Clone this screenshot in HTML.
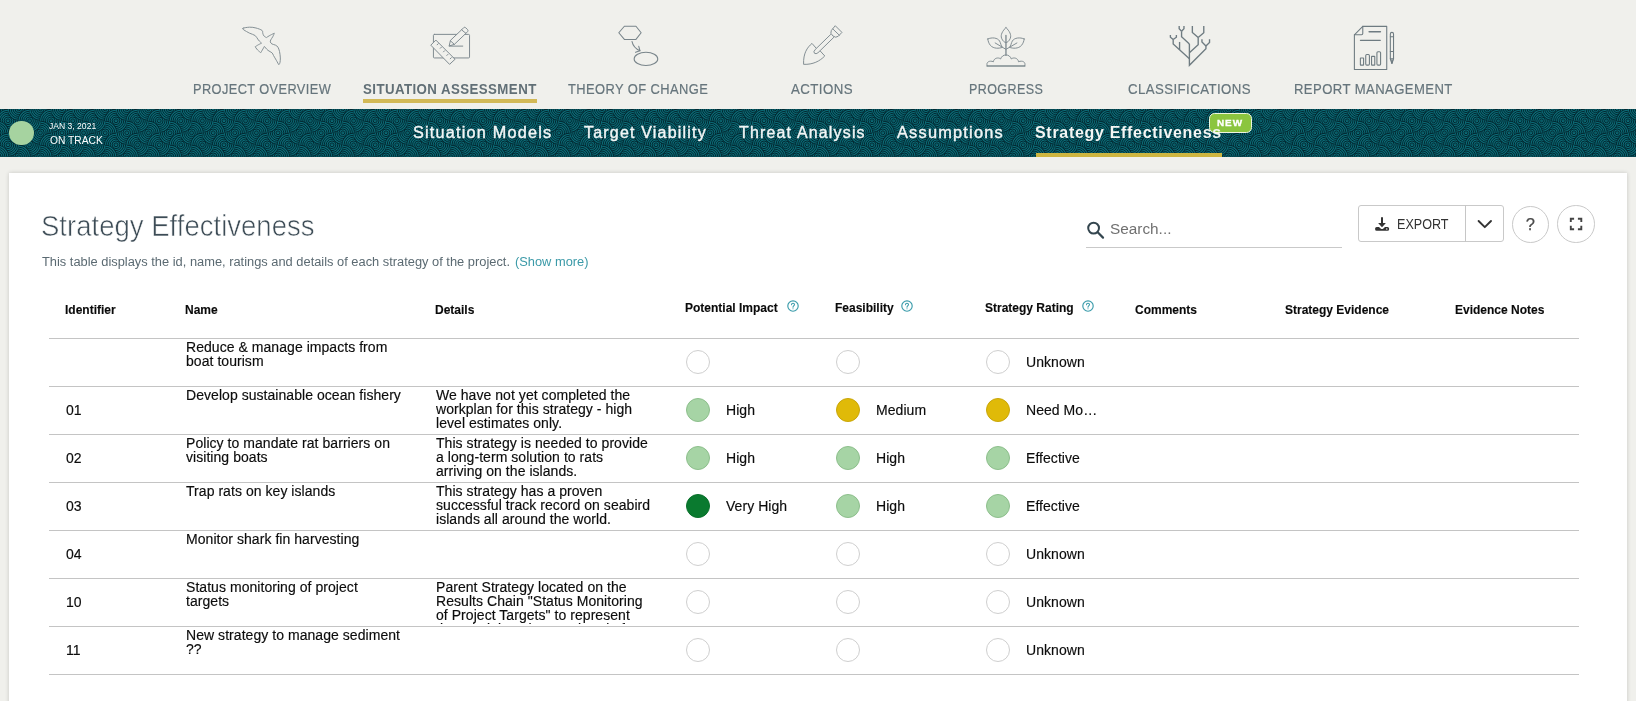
<!DOCTYPE html>
<html>
<head>
<meta charset="utf-8">
<title>Strategy Effectiveness</title>
<style>
*{box-sizing:border-box;margin:0;padding:0}
html,body{width:1636px;height:701px;overflow:hidden;background:#f0f0ec;font-family:"Liberation Sans",sans-serif;}
#root{will-change:transform;position:relative;width:1636px;height:701px;overflow:hidden;background:#f0f0ec}
.abs{position:absolute}
.f{position:absolute;white-space:nowrap;transform-origin:0 0;line-height:normal}
/* top nav */
.ni{position:absolute;overflow:visible}
.ni{fill:none;stroke-linecap:round;stroke-linejoin:round}
/* teal bar */
#bar{position:absolute;left:0;top:109px;width:1636px;height:48px;background:#0b5660;overflow:hidden}
/* card */
#card{position:absolute;left:9px;top:173px;width:1618px;height:560px;background:#fff;box-shadow:0 0 4px rgba(0,0,0,.18)}
/* table */
.th{position:absolute;top:303px;height:14px;line-height:14px;font-size:12px;font-weight:bold;color:#0a0a0a;white-space:nowrap;-webkit-text-stroke:.12px #0a0a0a}
.hl{position:absolute;left:49px;width:1530px;height:1px;background:#c4c4c4}
.row{position:absolute;left:48px;width:1531px;height:48px;font-size:14px;color:#0c0c0c;letter-spacing:.05px;-webkit-text-stroke:.15px #0c0c0c}
.row .id{position:absolute;left:18px;top:17px;line-height:14px}
.row .nm{position:absolute;left:138px;top:2.4px;width:240px;line-height:14px;white-space:nowrap}
.row .dt{position:absolute;left:388px;top:2.4px;width:240px;height:44px;line-height:14px;overflow:hidden;white-space:nowrap}
.dot{position:absolute;top:12px;width:24px;height:24px;border-radius:50%;border:1px solid #cfcfcf;background:#fff}
.dot.g{background:#a6d4a5;border-color:#8dbf8c}
.dot.y{background:#e0ba08;border-color:#c9a60a}
.dot.d{background:#0a7a2f;border-color:#08702a}
.lb{position:absolute;top:17px;line-height:14px;white-space:nowrap}
</style>
</head>
<body>
<div id="root">

<!-- TOP NAV LABELS -->
<div class="abs" style="left:363px;top:99px;width:174px;height:4px;background:#d2b957"></div>

<!-- NAVICONS -->
<svg class="ni" style="left:232px;top:18px" width="60" height="56" viewBox="0 0 751 701" stroke="#818c91" stroke-width="12"><path d="M138,128C150,122 193,116 220,115C247,114 274,118 300,125C326,132 361,144 375,155C389,166 381,178 385,190C389,202 392,216 400,225C408,234 430,245 430,245C430,245 463,224 480,215C497,206 530,190 530,190C530,190 518,221 510,235C502,249 490,264 485,275C480,286 478,292 480,300C482,308 489,318 500,325C511,332 532,333 545,340C558,347 567,352 575,365C583,378 590,398 595,420C600,442 604,477 605,500C606,523 603,546 600,560C597,574 585,585 585,585C585,585 566,549 555,530C544,511 529,486 520,470C511,454 512,446 500,435C488,424 466,418 450,405C434,392 405,355 405,355C405,355 388,387 380,400C372,413 360,435 360,435C360,435 332,412 320,400C308,388 290,360 290,360C290,360 317,342 330,335C343,328 370,315 370,315C370,315 343,291 330,275C317,259 308,234 290,220C272,206 243,202 220,190C197,178 164,160 150,150C136,140 126,134 138,128Z"/></svg>
<svg class="ni" style="left:420px;top:18px" width="60" height="56" viewBox="0 0 751 701" stroke="#7b878d" stroke-width="12"><rect x="168" y="205" width="452" height="295" rx="12"/><path d="M195,280 L135,340 L370,580 L435,520 Z" fill="#f0f0ec"/><path d="M228,322 l-14,14" stroke-width="12"/><path d="M268,365 l-14,14" stroke-width="12"/><path d="M308,410 l-14,14" stroke-width="12"/><path d="M350,455 l-14,14" stroke-width="12"/><path d="M392,497 l-14,14" stroke-width="12"/><path d="M520,148 L548,120 Q560,110 572,122 L596,146 Q606,158 596,170 L575,192 L430,330 L365,350 L380,285 Z" fill="#f0f0ec"/><path d="M520,148 L575,192"/><path d="M380,285 L430,330"/><path d="M365,352 L535,352"/></svg>
<svg class="ni" style="left:608px;top:18px" width="60" height="56" viewBox="0 0 751 701" stroke="#78848a" stroke-width="13"><path d="M205,103 L350,103 L415,185 L350,268 L205,268 L135,185 Z"/><path d="M300,293 C310,340 340,385 400,410"/><path d="M385,355 L400,410 L345,430"/><ellipse cx="475" cy="512" rx="148" ry="82"/></svg>
<svg class="ni" style="left:792px;top:18px" width="60" height="56" viewBox="0 0 751 701" stroke="#7e8a8f" stroke-width="12"><path d="M545,100 L625,180 L580,228 Q548,255 512,225 Q470,190 490,160 Z"/><path d="M512,138 L592,215"/><path d="M483,207 L290,395 Q262,425 282,442 Q300,455 325,435 L522,243"/><path d="M300,375 L250,318 C190,370 140,440 145,580 C260,585 350,540 410,475 L355,415"/></svg>
<svg class="ni" style="left:976px;top:18.6px" width="60" height="56" viewBox="0 0 751 701" stroke="#7e8a8f" stroke-width="12"><path d="M375,205 L375,455" stroke-width="17"/><path d="M375,108 C330,150 305,200 320,240 C332,275 360,295 375,295 C390,295 418,275 430,240 C445,200 420,150 375,108 Z"/><path d="M148,250 C200,225 270,235 295,275 C310,300 312,335 330,355 C290,370 220,375 180,330 C160,305 150,275 148,250 Z"/><path d="M603,250 C550,225 480,235 455,275 C440,300 438,335 420,355 C460,370 530,375 570,330 C590,305 601,275 603,250 Z"/><path d="M240,300 L375,380 L512,300"/><path d="M140,585 C120,540 170,515 218,535 C222,490 280,475 308,500 C318,468 345,450 375,450 C405,450 432,468 442,500 C470,475 528,490 532,535 C580,515 630,540 610,585" /><path d="M138,588 L612,588" stroke-width="17"/></svg>
<svg class="ni" style="left:1160px;top:18px" width="60" height="56" viewBox="0 0 751 701" stroke="#6e7b81" stroke-width="17"><path stroke-linecap="butt" stroke-linejoin="miter" d="M368,325 L368,592 L575,385 L575,350"/><path stroke-linecap="butt" stroke-linejoin="miter" d="M575,350 L525,300 L525,265"/><path stroke-linecap="butt" stroke-linejoin="miter" d="M575,350 L620,305 L620,265"/><path stroke-linecap="butt" stroke-linejoin="miter" d="M368,510 L165,325 L165,270"/><path stroke-linecap="butt" stroke-linejoin="miter" d="M165,270 L130,240 L130,213"/><path stroke-linecap="butt" stroke-linejoin="miter" d="M165,270 L205,240 L205,213"/><path stroke-linecap="butt" stroke-linejoin="miter" d="M245,398 L245,300"/><path stroke-linecap="butt" stroke-linejoin="miter" d="M368,435 L478,335 L478,245"/><path stroke-linecap="butt" stroke-linejoin="miter" d="M478,245 L405,182 L405,100"/><path stroke-linecap="butt" stroke-linejoin="miter" d="M478,245 L548,185 L548,100"/><path stroke-linecap="butt" stroke-linejoin="miter" d="M368,325 L270,235 L270,165"/><path stroke-linecap="butt" stroke-linejoin="miter" d="M270,165 L240,135 L240,100"/><path stroke-linecap="butt" stroke-linejoin="miter" d="M270,165 L300,135 L300,100"/></svg>
<svg class="ni" style="left:1344px;top:18px" width="60" height="56" viewBox="0 0 751 701" stroke="#6e7b81" stroke-width="13.5"><path d="M235,105 L535,105 L535,645 L130,645 L130,210 Z"/><path d="M235,105 L235,195 Q235,210 220,210 L130,210"/><path d="M315,172 L455,172" stroke-width="20"/><path d="M205,280 L455,280"/><rect x="205" y="500" width="40" height="90" rx="4"/><rect x="272" y="457" width="46" height="133" rx="14"/><rect x="345" y="480" width="40" height="110" rx="4"/><rect x="412" y="422" width="46" height="168" rx="14"/><path d="M580,510 L580,200 Q580,180 600,180 Q620,180 620,200 L620,510 L600,570 Z"/><path d="M580,235 L620,235"/><path d="M580,420 L620,420"/><path d="M580,510 L620,510"/><path d="M590,530 L600,570 L610,530 Z" stroke-width="10"/></svg>

<!-- TEAL BAR -->
<div id="bar">
<!--PATTERN--><svg class="abs" style="left:0;top:0" width="1636" height="48"><defs><g id="dc"><circle r="11.90" fill="#002730"/><circle r="11.05" fill="#0b6b76"/><circle r="1.92" fill="none" stroke="#002730" stroke-width="1.0"/><circle r="3.84" fill="none" stroke="#002730" stroke-width="1.0"/><circle r="5.76" fill="none" stroke="#002730" stroke-width="1.0"/><circle r="7.68" fill="none" stroke="#002730" stroke-width="1.0"/><circle r="9.60" fill="none" stroke="#002730" stroke-width="1.0"/></g><clipPath id="cA"><rect x="-13" y="-13" width="13" height="13"/><rect x="0" y="0" width="13" height="13"/></clipPath><clipPath id="cB"><rect x="0" y="-13" width="13" height="13"/><rect x="-13" y="0" width="13" height="13"/></clipPath><g id="qa" clip-path="url(#cA)"><use href="#dc"/></g><g id="qb" clip-path="url(#cB)"><use href="#dc"/></g><pattern id="pt" width="108" height="24" patternUnits="userSpaceOnUse"><rect width="108" height="24" fill="#002730"/><use href="#dc" x="-13.6" y="-12.2"/><use href="#dc" x="8.0" y="-12.2"/><use href="#dc" x="29.6" y="-12.2"/><use href="#dc" x="51.2" y="-12.2"/><use href="#dc" x="72.8" y="-12.2"/><use href="#dc" x="94.4" y="-12.2"/><use href="#dc" x="116.0" y="-12.2"/><use href="#dc" x="-2.8" y="-0.2"/><use href="#dc" x="18.8" y="-0.2"/><use href="#dc" x="40.4" y="-0.2"/><use href="#dc" x="62.0" y="-0.2"/><use href="#dc" x="83.6" y="-0.2"/><use href="#dc" x="105.2" y="-0.2"/><use href="#dc" x="-13.6" y="11.8"/><use href="#dc" x="8.0" y="11.8"/><use href="#dc" x="29.6" y="11.8"/><use href="#dc" x="51.2" y="11.8"/><use href="#dc" x="72.8" y="11.8"/><use href="#dc" x="94.4" y="11.8"/><use href="#dc" x="116.0" y="11.8"/><use href="#dc" x="-2.8" y="23.8"/><use href="#dc" x="18.8" y="23.8"/><use href="#dc" x="40.4" y="23.8"/><use href="#dc" x="62.0" y="23.8"/><use href="#dc" x="83.6" y="23.8"/><use href="#dc" x="105.2" y="23.8"/><use href="#dc" x="-13.6" y="35.8"/><use href="#dc" x="8.0" y="35.8"/><use href="#dc" x="29.6" y="35.8"/><use href="#dc" x="51.2" y="35.8"/><use href="#dc" x="72.8" y="35.8"/><use href="#dc" x="94.4" y="35.8"/><use href="#dc" x="116.0" y="35.8"/><use href="#qa" x="-13.6" y="-12.2"/><use href="#qa" x="8.0" y="-12.2"/><use href="#qa" x="29.6" y="-12.2"/><use href="#qa" x="51.2" y="-12.2"/><use href="#qa" x="72.8" y="-12.2"/><use href="#qa" x="94.4" y="-12.2"/><use href="#qa" x="116.0" y="-12.2"/><use href="#qb" x="-2.8" y="-0.2"/><use href="#qb" x="18.8" y="-0.2"/><use href="#qb" x="40.4" y="-0.2"/><use href="#qb" x="62.0" y="-0.2"/><use href="#qb" x="83.6" y="-0.2"/><use href="#qb" x="105.2" y="-0.2"/><use href="#qa" x="-13.6" y="11.8"/><use href="#qa" x="8.0" y="11.8"/><use href="#qa" x="29.6" y="11.8"/><use href="#qa" x="51.2" y="11.8"/><use href="#qa" x="72.8" y="11.8"/><use href="#qa" x="94.4" y="11.8"/><use href="#qa" x="116.0" y="11.8"/><use href="#qb" x="-2.8" y="23.8"/><use href="#qb" x="18.8" y="23.8"/><use href="#qb" x="40.4" y="23.8"/><use href="#qb" x="62.0" y="23.8"/><use href="#qb" x="83.6" y="23.8"/><use href="#qb" x="105.2" y="23.8"/><use href="#qa" x="-13.6" y="35.8"/><use href="#qa" x="8.0" y="35.8"/><use href="#qa" x="29.6" y="35.8"/><use href="#qa" x="51.2" y="35.8"/><use href="#qa" x="72.8" y="35.8"/><use href="#qa" x="94.4" y="35.8"/><use href="#qa" x="116.0" y="35.8"/></pattern></defs><rect width="1636" height="48" fill="url(#pt)"/></svg><!--/PATTERN-->
<div class="abs" style="left:9.1px;top:11.7px;width:24.7px;height:24.7px;border-radius:50%;background:#a6d3a0"></div>
<div class="abs" style="left:1036px;top:44px;width:186px;height:4px;background:#cdb540"></div>
<div class="abs" style="left:1209px;top:4px;width:43px;height:20px;border-radius:5.5px;background:#8bc53f;border:1.5px solid #eef6e0"></div><div class="f" style="left:1217.16px;top:7.8px;font-size:9.5px;font-weight:bold;letter-spacing:.9px;color:#fff;transform:scaleX(1.0435);-webkit-text-stroke:.3px #fff">NEW</div>
</div>

<!-- CARD -->
<div id="card"></div>

<!-- SEARCH -->
<svg class="abs" style="left:1085px;top:220px" width="22" height="20" viewBox="0 0 22 20" fill="none" stroke="#33454e" stroke-width="2" stroke-linecap="round"><circle cx="8.6" cy="8.1" r="5.4"/><path d="M12.7 12.3 L18 17.6" stroke-width="2.2"/></svg>
<div class="abs" style="left:1086px;top:247px;width:256px;height:1px;background:#c9c9c9"></div>
<!-- TOOLBAR -->
<div class="abs" style="left:1358px;top:205px;width:146px;height:37px;border:1px solid #c9c9c9;border-radius:3px;background:#fff"></div>
<div class="abs" style="left:1464.6px;top:205px;width:1.7px;height:37px;background:#c6c6c6"></div>
<svg class="abs" style="left:1374px;top:216px" width="16" height="16" viewBox="0 0 16 16"><path d="M7 1.2 H9 V7 H11.9 L8 11.2 L4.1 7 H7 Z" fill="#333"/><path d="M1.1 12.6 Q1.1 11 2.7 11 H5 L6.6 12.5 Q8 13.5 9.4 12.5 L11 11 H13.5 Q15.1 11 15.1 12.6 V13.2 Q15.1 14.8 13.5 14.8 H2.7 Q1.1 14.8 1.1 13.2 Z" fill="#333"/><circle cx="12.8" cy="13" r=".7" fill="#fff"/></svg>
<svg class="abs" style="left:1476px;top:218px" width="18" height="12" viewBox="0 0 18 12" fill="none" stroke="#333" stroke-width="1.9" stroke-linecap="round" stroke-linejoin="round"><path d="M2.6 3 L8.8 9.2 L15 3"/></svg>
<div class="abs" style="left:1511.5px;top:206px;width:37px;height:37px;border:1px solid #c9c9c9;border-radius:50%;background:#fff"></div>
<div class="f" style="left:1525.8px;top:215.3px;font-size:16.5px;color:#4c4c4c;-webkit-text-stroke:.25px #4c4c4c">?</div>
<div class="abs" style="left:1557px;top:205px;width:37.5px;height:37.5px;border:1px solid #c9c9c9;border-radius:50%;background:#fff"></div>
<svg class="abs" style="left:1569px;top:217px" width="14" height="14" viewBox="0 0 14 14" fill="none" stroke="#444" stroke-width="1.9" stroke-linejoin="miter"><path d="M1.8 5 V1.7 H5.1 M8.9 1.7 H12.3 V5 M12.3 8.8 V12.2 H8.9 M5.1 12.2 H1.8 V8.8"/></svg>
<!--FIT-->
<div class="f" style="left:192.89px;top:81.0px;font-size:14px;letter-spacing:.45px;color:#66757c;transform:scaleX(0.9127);-webkit-text-stroke:.2px #66757c">PROJECT OVERVIEW</div>
<div class="f" style="left:362.75px;top:81.0px;font-size:14px;letter-spacing:.45px;font-weight:bold;color:#616f76;transform:scaleX(0.9478)">SITUATION ASSESSMENT</div>
<div class="f" style="left:567.9px;top:81.0px;font-size:14px;letter-spacing:.45px;color:#66757c;transform:scaleX(0.9212);-webkit-text-stroke:.2px #66757c">THEORY OF CHANGE</div>
<div class="f" style="left:791.0px;top:81.0px;font-size:14px;letter-spacing:.45px;color:#66757c;transform:scaleX(0.9469);-webkit-text-stroke:.2px #66757c">ACTIONS</div>
<div class="f" style="left:968.51px;top:81.0px;font-size:14px;letter-spacing:.45px;color:#66757c;transform:scaleX(0.8938);-webkit-text-stroke:.2px #66757c">PROGRESS</div>
<div class="f" style="left:1128.16px;top:81.0px;font-size:14px;letter-spacing:.45px;color:#66757c;transform:scaleX(0.9445);-webkit-text-stroke:.2px #66757c">CLASSIFICATIONS</div>
<div class="f" style="left:1293.96px;top:81.0px;font-size:14px;letter-spacing:.45px;color:#66757c;transform:scaleX(0.9351);-webkit-text-stroke:.2px #66757c">REPORT MANAGEMENT</div>
<div class="f" style="left:412.59px;top:124.3px;font-size:16px;letter-spacing:1.2px;color:#f2f6f6;transform:scaleX(1.0141);-webkit-text-stroke:.4px #f2f6f6">Situation Models</div>
<div class="f" style="left:584.0px;top:124.3px;font-size:16px;letter-spacing:1.2px;color:#f2f6f6;transform:scaleX(0.9992);-webkit-text-stroke:.4px #f2f6f6">Target Viability</div>
<div class="f" style="left:738.8px;top:124.3px;font-size:16px;letter-spacing:1.2px;color:#f2f6f6;transform:scaleX(0.9952);-webkit-text-stroke:.4px #f2f6f6">Threat Analysis</div>
<div class="f" style="left:897.3px;top:124.3px;font-size:16px;letter-spacing:1.2px;color:#f2f6f6;transform:scaleX(1.0204);-webkit-text-stroke:.4px #f2f6f6">Assumptions</div>
<div class="f" style="left:1035.2px;top:124.3px;font-size:16px;letter-spacing:.7px;font-weight:bold;color:#f4f6f4;transform:scaleX(0.9989)">Strategy Effectiveness</div>
<div class="f" style="left:48.75px;top:120.9px;font-size:9px;color:#fff;transform:scaleX(0.9521)">JAN 3, 2021</div>
<div class="f" style="left:49.62px;top:134.4px;font-size:10.5px;color:#fff;transform:scaleX(0.9755)">ON TRACK</div>
<div class="f" style="left:40.64px;top:210.4px;font-size:28.7px;color:#3d4c56;transform:scaleX(0.9601);-webkit-text-stroke:.6px #fff">Strategy Effectiveness</div>
<div class="f" style="left:41.9px;top:254.6px;font-size:12.5px;color:#5b6a72;transform:scaleX(1.0282)">This table displays the id, name, ratings and details of each strategy of the project.</div>
<div class="f" style="left:515.37px;top:254.6px;font-size:12.5px;color:#3b9aa8;transform:scaleX(1.0271)">(Show more)</div>
<div class="f" style="left:1109.71px;top:219.9px;font-size:15.5px;color:#707070;transform:scaleX(0.99)">Search...</div>
<div class="f" style="left:1397.0px;top:216.1px;font-size:14px;color:#333;transform:scaleX(0.8982)">EXPORT</div>
<!--/FIT-->


<!-- TABLE HEAD -->
<div class="th" style="left:65px">Identifier</div>
<div class="th" style="left:185px">Name</div>
<div class="th" style="left:435px">Details</div>
<div class="th" style="left:685px;top:301px">Potential Impact</div>
<div class="th" style="left:835px;top:301px">Feasibility</div>
<div class="th" style="left:985px;top:301px">Strategy Rating</div>
<div class="th" style="left:1135px">Comments</div>
<div class="th" style="left:1285px">Strategy Evidence</div>
<div class="th" style="left:1455px">Evidence Notes</div>
<svg class="abs" style="left:786px;top:298.9px" width="14" height="14" viewBox="0 0 14 14" fill="none" stroke="#3b9cab" stroke-width="1.15"><circle cx="7" cy="7" r="5.2"/><path d="M5.5 5.7 Q5.5 4.3 7 4.3 Q8.5 4.3 8.5 5.6 Q8.5 6.5 7.6 7 Q7 7.4 7 8.2" stroke-width="1.05" stroke-linecap="round"/><circle cx="7" cy="9.8" r=".55" fill="#3b9cab" stroke="none"/></svg>
<svg class="abs" style="left:899.7px;top:298.9px" width="14" height="14" viewBox="0 0 14 14" fill="none" stroke="#3b9cab" stroke-width="1.15"><circle cx="7" cy="7" r="5.2"/><path d="M5.5 5.7 Q5.5 4.3 7 4.3 Q8.5 4.3 8.5 5.6 Q8.5 6.5 7.6 7 Q7 7.4 7 8.2" stroke-width="1.05" stroke-linecap="round"/><circle cx="7" cy="9.8" r=".55" fill="#3b9cab" stroke="none"/></svg>
<svg class="abs" style="left:1081.3px;top:298.9px" width="14" height="14" viewBox="0 0 14 14" fill="none" stroke="#3b9cab" stroke-width="1.15"><circle cx="7" cy="7" r="5.2"/><path d="M5.5 5.7 Q5.5 4.3 7 4.3 Q8.5 4.3 8.5 5.6 Q8.5 6.5 7.6 7 Q7 7.4 7 8.2" stroke-width="1.05" stroke-linecap="round"/><circle cx="7" cy="9.8" r=".55" fill="#3b9cab" stroke="none"/></svg>
<div class="hl" style="top:338px"></div>

<!-- ROWS -->
<div class="row" style="top:338px"><div class="nm">Reduce &amp; manage impacts from<br>boat tourism</div><div class="dot" style="left:638px"></div><div class="dot" style="left:788px"></div><div class="dot" style="left:938px"></div><div class="lb" style="left:978px">Unknown</div></div>
<div class="hl" style="top:386px"></div>
<div class="row" style="top:386px"><div class="id">01</div><div class="nm">Develop sustainable ocean fishery</div><div class="dt">We have not yet completed the<br>workplan for this strategy - high<br>level estimates only.</div><div class="dot g" style="left:638px"></div><div class="lb" style="left:678px">High</div><div class="dot y" style="left:788px"></div><div class="lb" style="left:828px">Medium</div><div class="dot y" style="left:938px"></div><div class="lb" style="left:978px">Need Mo…</div></div>
<div class="hl" style="top:434px"></div>
<div class="row" style="top:434px"><div class="id">02</div><div class="nm">Policy to mandate rat barriers on<br>visiting boats</div><div class="dt">This strategy is needed to provide<br>a long-term solution to rats<br>arriving on the islands.</div><div class="dot g" style="left:638px"></div><div class="lb" style="left:678px">High</div><div class="dot g" style="left:788px"></div><div class="lb" style="left:828px">High</div><div class="dot g" style="left:938px"></div><div class="lb" style="left:978px">Effective</div></div>
<div class="hl" style="top:482px"></div>
<div class="row" style="top:482px"><div class="id">03</div><div class="nm">Trap rats on key islands</div><div class="dt">This strategy has a proven<br>successful track record on seabird<br>islands all around the world.</div><div class="dot d" style="left:638px"></div><div class="lb" style="left:678px">Very High</div><div class="dot g" style="left:788px"></div><div class="lb" style="left:828px">High</div><div class="dot g" style="left:938px"></div><div class="lb" style="left:978px">Effective</div></div>
<div class="hl" style="top:530px"></div>
<div class="row" style="top:530px"><div class="id">04</div><div class="nm">Monitor shark fin harvesting</div><div class="dot" style="left:638px"></div><div class="dot" style="left:788px"></div><div class="dot" style="left:938px"></div><div class="lb" style="left:978px">Unknown</div></div>
<div class="hl" style="top:578px"></div>
<div class="row" style="top:578px"><div class="id">10</div><div class="nm">Status monitoring of project<br>targets</div><div class="dt">Parent Strategy located on the<br>Results Chain "Status Monitoring<br>of Project Targets" to represent<br>the administrative overhead of</div><div class="dot" style="left:638px"></div><div class="dot" style="left:788px"></div><div class="dot" style="left:938px"></div><div class="lb" style="left:978px">Unknown</div></div>
<div class="hl" style="top:626px"></div>
<div class="row" style="top:626px"><div class="id">11</div><div class="nm">New strategy to manage sediment<br>??</div><div class="dot" style="left:638px"></div><div class="dot" style="left:788px"></div><div class="dot" style="left:938px"></div><div class="lb" style="left:978px">Unknown</div></div>
<div class="hl" style="top:674px"></div>

</div>
</body>
</html>
